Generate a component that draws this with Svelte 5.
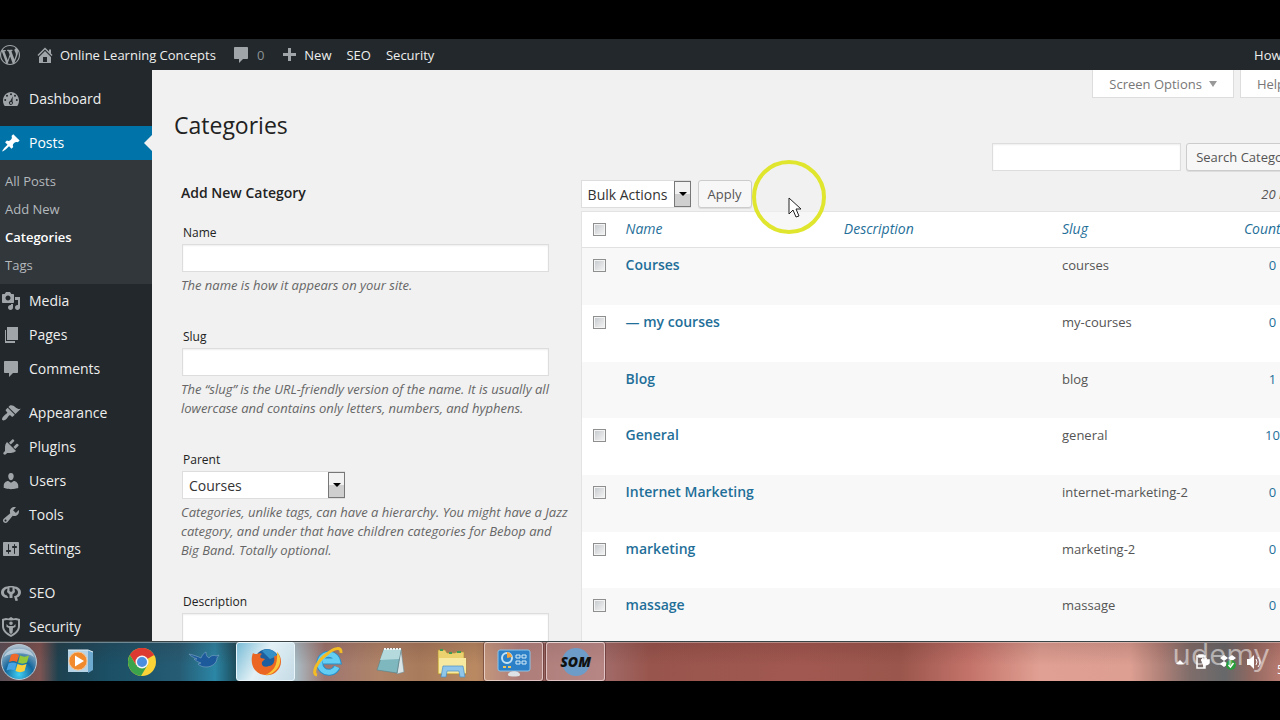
<script lang="ts">
    type Item = { label: string; icon: string; gap?: boolean; open?: boolean };

    const icons: Record<string, string> = {
        wordpress: 'M20 10c0-5.51-4.49-10-10-10C4.48 0 0 4.49 0 10c0 5.52 4.48 10 10 10 5.51 0 10-4.48 10-10zM7.78 15.37L4.37 6.22c.55-.02 1.17-.08 1.17-.08.5-.06.44-1.13-.06-1.11 0 0-1.45.11-2.37.11-.18 0-.37 0-.58-.01C4.12 2.69 6.87 1.11 10 1.11c2.33 0 4.45.87 6.05 2.34-.68-.11-1.65.39-1.65 1.58 0 .74.45 1.36.9 2.1.35.61.55 1.36.55 2.46 0 1.49-1.4 5-1.4 5l-3.03-8.37c.54-.02.82-.17.82-.17.5-.05.44-1.25-.06-1.22 0 0-1.44.12-2.38.12-.87 0-2.33-.12-2.33-.12-.5-.03-.56 1.2-.06 1.22l.92.08 1.26 3.41zM17.41 10c.24-.64.74-1.87.43-4.25.7 1.29 1.05 2.71 1.05 4.25 0 3.29-1.73 6.24-4.4 7.78.97-2.59 1.94-5.2 2.92-7.78zM6.1 18.09C3.12 16.65 1.11 13.53 1.11 10c0-1.3.23-2.48.72-3.59C3.25 10.3 4.67 14.2 6.1 18.09zm4.03-6.63l2.58 6.98c-.86.29-1.76.45-2.71.45-.79 0-1.57-.11-2.29-.33.81-2.38 1.62-4.74 2.42-7.1z',
        home: 'M16 8.5l1.53 1.53-1.06 1.06L10 4.6l-6.47 6.49-1.06-1.06L10 2.5l4 4v-2h2v4zm-6-2.46l6 5.99V18H4v-5.97zM12 17v-5H8v5h4z',
        comment: 'M4 2h12c.6 0 1 .4 1 1v10c0 .6-.4 1-1 1h-4l-4 4v-4H4c-.6 0-1-.4-1-1V3c0-.6.400-1 1-1z',
        plus: 'M17 8v3h-5v5H9v-5H4V8h5V3h3v5z',
        dashboard: 'M3.76 17h12.48c1.34-1.63 1.76-3.64 1.76-5.5C18 6.9 14.4 3 10 3S2 6.9 2 11.5c0 1.86.42 3.87 1.76 5.5zM10 4.2a1 1 0 110 2 1 1 0 010-2zM6 5.8a1 1 0 110 2 1 1 0 010-2zm8 0a1 1 0 110 2 1 1 0 010-2zM4.2 10a1 1 0 110 2 1 1 0 010-2zm11.6 0a1 1 0 110 2 1 1 0 010-2zm-4-2.8l-.3 5.3a2 2 0 11-2.2-.6zM10 13a1 1 0 100 2 1 1 0 000-2z',
        post: 'M10.44 3.02l1.82-1.82 6.36 6.35-1.83 1.82c-1.05-.68-2.48-.57-3.41.36l-.75.75c-.92.93-1.04 2.35-.35 3.41l-1.83 1.82-2.41-2.41-2.8 2.79c-.42.42-3.38 2.71-3.8 2.29s1.86-3.39 2.28-3.81l2.79-2.79L4.1 9.36l1.83-1.82c1.05.69 2.48.57 3.4-.36l.75-.75c.93-.92 1.05-2.35.36-3.41z',
        media: 'M13 11V4c0-.55-.45-1-1-1h-1.67L9 1H5L3.67 3H2c-.55 0-1 .45-1 1v7c0 .55.45 1 1 1h10c.55 0 1-.45 1-1zM7 4.5c1.38 0 2.5 1.12 2.5 2.5S8.38 9.5 7 9.5 4.5 8.38 4.5 7 5.62 4.5 7 4.5zM14 6h5v10.5c0 1.38-1.12 2.5-2.5 2.5S14 17.88 14 16.5s1.12-2.5 2.5-2.5c.17 0 .34.02.5.05V9h-3V6zm-4 8.05V13h2v3.5c0 1.38-1.12 2.5-2.5 2.5S7 17.88 7 16.5 8.12 14 9.5 14c.17 0 .34.02.5.05z',
        page: 'M6 15V2h11v13H6zm-1 1h9v2H4V5h1v11z',
        appearance: 'M14.48 11.06L7.41 3.99l1.5-1.5c.5-.56 2.3-.47 3.51.32 1.21.8 1.43 1.28 2.91 2.1 1.18.64 2.45 1.26 4.45.85zm-.71.71L6.7 4.7 4.93 6.47c-.39.39-.39 1.02 0 1.41l1.06 1.06c.39.39.39 1.03 0 1.42-.6.6-1.43 1.11-2.21 1.69-.35.26-.7.53-1.01.84C1.43 14.23.4 16.08 1.4 17.07c.99 1 2.84-.03 4.18-1.36.31-.31.58-.66.85-1.02.57-.78 1.08-1.61 1.69-2.21.39-.39 1.02-.39 1.41 0l1.06 1.06c.39.39 1.02.39 1.41 0z',
        plugin: 'M13.11 4.36L9.87 7.6 8 5.73l3.24-3.24c.35-.34 1.05-.2 1.56.32.52.51.66 1.21.31 1.55zm-8 1.77l.91-1.12 9.01 9.01-1.19.84c-.71.71-2.63 1.16-3.82 1.16H6.14L4.9 17.26c-.59.59-1.54.59-2.12 0-.59-.58-.59-1.53 0-2.12l1.24-1.24v-3.88c0-1.13.4-3.19 1.09-3.89zm7.26 3.97l3.24-3.24c.34-.35 1.04-.21 1.55.31.52.51.66 1.21.31 1.55l-3.24 3.25z',
        user: 'M10 9.25c-2.27 0-2.73-3.44-2.73-3.44C7 4.02 7.82 2 9.97 2c2.16 0 2.98 2.02 2.71 3.81 0 0-.41 3.44-2.68 3.44zm0 2.57L12.72 10c2.39 0 4.52 2.33 4.52 4.53v2.49s-3.65 1.13-7.24 1.13c-3.65 0-7.24-1.13-7.24-1.13v-2.49c0-2.25 1.94-4.48 4.47-4.48z',
        tool: 'M16.68 9.77c-1.34 1.34-3.3 1.67-4.95.99l-5.41 6.52c-.99.99-2.59.99-3.58 0s-.99-2.59 0-3.57l6.52-5.42c-.68-1.65-.35-3.61.99-4.95 1.28-1.28 3.12-1.62 4.72-1.06l-2.89 2.89 2.82 2.82 2.86-2.87c.53 1.58.18 3.39-1.08 4.65zM3.81 16.21c.4.39 1.04.39 1.43 0 .4-.4.4-1.04 0-1.43-.39-.4-1.03-.4-1.43 0-.39.39-.39 1.03 0 1.43z',
        settings: 'M18 16V4c0-.55-.45-1-1-1H3c-.55 0-1 .45-1 1v12c0 .55.45 1 1 1h14c.55 0 1-.45 1-1zM8 11h1c.55 0 1 .45 1 1s-.45 1-1 1H8v1.5c0 .28-.22.5-.5.5s-.5-.22-.5-.5V13H6c-.55 0-1-.45-1-1s.45-1 1-1h1V5.5c0-.28.22-.5.5-.5s.5.22.5.5V11zm5-2h-1c-.55 0-1-.45-1-1s.45-1 1-1h1V5.5c0-.28.22-.5.5-.5s.5.22.5.5V7h1c.55 0 1 .45 1 1s-.45 1-1 1h-1v5.5c0 .28-.22.5-.5.5s-.5-.22-.5-.5V9z',
        seo: 'M10 3C4.600 3 0 5 0 9.500c0 3.500 3 5.500 7.500 5.500L6 12.500C4 12 3 11 3 9.200 3 7.500 4.500 6 6.500 5.500L6 9l2.500 2.500V15h3v-3.500L14 9l-.5-3.500c2 .5 3.500 2 3.500 4 0 2-1.500 3.200-4 3.700l1.500 4.800 2.500-.5-1-3c2.600-1 4-2.900 4-5.300C20 5 15.400 3 10 3zM8.500 4.500V8l1.500 1 1.500-1V4.500z',
        security: 'M10 0L7.500 1.500 5 1 1 2v7c0 5 4 8.500 9 11 5-2.500 9-6 9-11V2l-4-1-2.500.5zM3 3.500l3-.5 4 .5 4-.5 3 .5V9c0 4-3 6.700-7 8.800C6 15.700 3 13 3 9zM10 4.500a1.800 1.800 0 100 3.600 1.800 1.800 0 000-3.600zM5.500 7v3L8 11l.5 5 1.500 1 1.500-1 .5-5 2.500-1V7l-2 2H7.500z'
    };

    const menu: Item[] = [
        { label: 'Dashboard', icon: 'dashboard' },
        { label: 'Posts', icon: 'post', gap: true, open: true },
        { label: 'Media', icon: 'media' },
        { label: 'Pages', icon: 'page' },
        { label: 'Comments', icon: 'comment' },
        { label: 'Appearance', icon: 'appearance', gap: true },
        { label: 'Plugins', icon: 'plugin' },
        { label: 'Users', icon: 'user' },
        { label: 'Tools', icon: 'tool' },
        { label: 'Settings', icon: 'settings' },
        { label: 'SEO', icon: 'seo', gap: true },
        { label: 'Security', icon: 'security' }
    ];
    const submenu = ['All Posts', 'Add New', 'Categories', 'Tags'];

    const categories = [
        { name: 'Courses', slug: 'courses', count: 0 },
        { name: '— my courses', slug: 'my-courses', count: 0 },
        { name: 'Blog', slug: 'blog', count: 1, locked: true },
        { name: 'General', slug: 'general', count: 10 },
        { name: 'Internet Marketing', slug: 'internet-marketing-2', count: 0 },
        { name: 'marketing', slug: 'marketing-2', count: 0 },
        { name: 'massage', slug: 'massage', count: 0 }
    ];

    let name = $state('');
    let slug = $state('');
    let parent = $state('Courses');
    let description = $state('');
    let search = $state('');
</script>

{#snippet icon(id: string)}
    <svg class="icon" viewBox="0 0 20 20" aria-hidden="true"><path fill-rule="evenodd" d={icons[id]} /></svg>
{/snippet}

<div class="screen">
    <div class="admin">
        <nav class="adminbar">
            <a href="#wp" aria-label="About WordPress">{@render icon('wordpress')}</a>
            <a href="#site" class="site">{@render icon('home')}Online Learning Concepts</a>
            <a href="#comments" class="bubble">{@render icon('comment')}0</a>
            <a href="#new" class="new">{@render icon('plus')}New</a>
            <a href="#seo">SEO</a>
            <a href="#security">Security</a>
            <a href="#profile" class="howdy">Howdy</a>
        </nav>

        <div class="main">
            <nav class="sidebar">
                {#each menu as item}
                    <a href="#{item.icon}" class="item" class:gap={item.gap} class:open={item.open}>
                        {@render icon(item.icon)}{item.label}
                    </a>
                    {#if item.open}
                        <div class="submenu">
                            {#each submenu as sub}
                                <a href="#{sub}" class:current={sub === 'Categories'}>{sub}</a>
                            {/each}
                        </div>
                    {/if}
                {/each}
            </nav>

            <main class="content">
                <div class="meta-tabs">
                    <button>Screen Options <span class="caret"></span></button>
                    <button>Help <span class="caret"></span></button>
                </div>
                <h1>Categories</h1>
                <form class="search">
                    <input type="text" aria-label="Search Categories" bind:value={search} />
                    <button type="button" class="btn">Search Categories</button>
                </form>

                <div class="columns">
                    <form class="add-form">
                        <h2>Add New Category</h2>
                        <div class="field">
                            <label for="name">Name</label>
                            <input id="name" type="text" bind:value={name} />
                            <p>The name is how it appears on your site.</p>
                        </div>
                        <div class="field">
                            <label for="slug">Slug</label>
                            <input id="slug" type="text" bind:value={slug} />
                            <p>The “slug” is the URL-friendly version of the name. It is usually all lowercase and contains only letters, numbers, and hyphens.</p>
                        </div>
                        <div class="field">
                            <label for="parent">Parent</label>
                            <div class="select parent">
                                <select id="parent" bind:value={parent}>
                                    <option>Courses</option>
                                    <option>Blog</option>
                                    <option>General</option>
                                </select>
                                <span class="arrow"></span>
                            </div>
                            <p>Categories, unlike tags, can have a hierarchy. You might have a Jazz category, and under that have children categories for Bebop and Big Band. Totally optional.</p>
                        </div>
                        <div class="field">
                            <label for="description">Description</label>
                            <textarea id="description" rows="5" bind:value={description}></textarea>
                        </div>
                    </form>

                    <section class="list">
                        <div class="tablenav">
                            <div class="select bulk">
                                <select aria-label="Bulk Actions">
                                    <option>Bulk Actions</option>
                                    <option>Delete</option>
                                </select>
                                <span class="arrow"></span>
                            </div>
                            <button class="btn apply">Apply</button>
                            <span class="total">20 items</span>
                        </div>
                        <table>
                            <thead>
                                <tr>
                                    <th class="check"><input type="checkbox" aria-label="Select all" /></th>
                                    <th class="name"><a href="#sort-name">Name</a></th>
                                    <th class="desc"><a href="#sort-description">Description</a></th>
                                    <th class="slug"><a href="#sort-slug">Slug</a></th>
                                    <th><a href="#sort-count">Count</a></th>
                                </tr>
                            </thead>
                            <tbody>
                                {#each categories as cat}
                                    <tr>
                                        <td class="check">
                                            {#if !cat.locked}<input type="checkbox" aria-label="Select {cat.name}" />{/if}
                                        </td>
                                        <td><a class="title" href="#{cat.slug}">{cat.name}</a></td>
                                        <td></td>
                                        <td>{cat.slug}</td>
                                        <td class="count"><a href="#posts-{cat.slug}">{cat.count}</a></td>
                                    </tr>
                                {/each}
                            </tbody>
                        </table>
                    </section>
                </div>
            </main>
        </div>
    </div>

    <footer class="taskbar">
        <button class="start" aria-label="Start">
            <svg width="38" height="38" viewBox="0 0 38 38">
                <defs>
                    <radialGradient id="orb" cx=".5" cy=".85" r=".8">
                        <stop offset="0" stop-color="#3fd0f4" /><stop offset=".5" stop-color="#14669c" /><stop offset="1" stop-color="#a9bccb" />
                    </radialGradient>
                </defs>
                <circle cx="19" cy="19" r="17.500" fill="url(#orb)" stroke="#b9c9d4" />
                <path d="M11 12c3-2 5-1.500 8 0l-2 7c-3-1.500-5-1.500-8 0z" fill="#ee6a2c" />
                <path d="M20 12.500c3 1.500 6 1.500 9 0l-2 7c-3 1.500-6 1.500-9 0z" fill="#96c83c" />
                <path d="M8.500 20.500c3-1.500 5-1.500 8 0l-2 7c-3-1.500-5-1.500-8 0z" fill="#46a4e4" />
                <path d="M17.500 21c3 1.500 6 1.500 9 0l-2 7c-3 1.500-6 1.500-9 0z" fill="#fbd03c" />
                <path d="M4 14C7 3 31 3 34 14 27 9 11 9 4 14z" fill="#fff" opacity=".45" />
            </svg>
        </button>
        <button class="task" aria-label="Media Player">
            <svg width="32" height="32" viewBox="0 0 32 32">
                <path d="M4 4h20v22H4z" fill="#b7d4e6" /><path d="M24 4l5 2v18l-5 3z" fill="#6ea9cf" /><path d="M4 4h20l5 2" stroke="#e4f1f8" fill="none" />
                <circle cx="14" cy="15" r="9" fill="#f08a2c" stroke="#f9c18c" /><path d="M11 9.500l9 5.500-9 5.500z" fill="#fff" />
            </svg>
        </button>
        <button class="task" aria-label="Chrome">
            <svg width="32" height="32" viewBox="0 0 32 32">
                <circle cx="16" cy="16" r="14" fill="#fbd336" />
                <path d="M16 16L3.900 9A14 14 0 0128.100 9z" fill="#dc3a30" /><path d="M16 9h12.100A14 14 0 003.900 9L10 19z" fill="#dc3a30" />
                <path d="M3.900 9A14 14 0 0015 30l6.500-11L16 16l-6 3z" fill="#3ba34c" />
                <circle cx="16" cy="16" r="6.500" fill="#f4f4f4" /><circle cx="16" cy="16" r="5" fill="#4b8ee0" />
            </svg>
        </button>
        <button class="task" aria-label="Bird">
            <svg width="32" height="32" viewBox="0 0 32 32">
                <path d="M1 8c4 1 8 2 12 4 1-3 3-5 5-6 0 3 1 5 3 6 2-3 6-3 7-2l3-1-2 3c0 5-5 9-11 9-3 0-6-1-8-3l3-1c-3-1-5-2-7-4l3 0C5 11 2 10 1 8z" fill="#1c5a9c" stroke="#7fa5c4" stroke-width=".6" />
            </svg>
        </button>
        <button class="task active" aria-label="Firefox">
            <svg width="32" height="32" viewBox="0 0 32 32">
                <circle cx="17" cy="15" r="12" fill="#1d5f9e" /><path d="M12 5c5-4 13-1 15 5l-7 3z" fill="#3690c8" />
                <path d="M3 7c1 1 2 1 4 1 2-1 4-1 5 0-2 1-2 3-1 4l4 1-3 3c-1 4 3 6 7 4 5-1 6-5 5-10 3 1 4-2 3-4 6 6 5 15-1 20-6 5-16 4-21-2C1 19 1 12 3 7z" fill="#ea6622" />
                <path d="M27 6c5 6 4 14-2 19-3 3-7 4-10 4 8-3 13-9 12-23z" fill="#fbc53a" />
            </svg>
        </button>
        <button class="task" aria-label="Internet Explorer">
            <svg width="32" height="32" viewBox="0 0 32 32">
                <path d="M25 21a9 9 0 11.500-6H11" fill="none" stroke="#2a8fcb" stroke-width="7" /><path d="M25 21a9 9 0 11.500-6H11" fill="none" stroke="#63cdf4" stroke-width="5" />
                <path d="M5 29C-1 28 5 15 15 8 22 2 30 0 29 7" fill="none" stroke="#f4bc24" stroke-width="3" />
            </svg>
        </button>
        <button class="task" aria-label="Notepad">
            <svg width="32" height="32" viewBox="0 0 32 32">
                <path d="M27 3l3 23-7 2z" fill="#d9e4e6" stroke="#6f8f98" stroke-width=".6" /><path d="M10 3h17l-4 24-20-3z" fill="#7fb7bf" stroke="#56828a" stroke-width=".6" />
                <path d="M10 3h17l-2 10L6 14z" fill="#b5dadd" /><path d="M10 3h17" stroke="#f0f4f4" stroke-width="2" stroke-dasharray="2 1" />
            </svg>
        </button>
        <button class="task" aria-label="Explorer">
            <svg width="34" height="32" viewBox="0 0 34 32">
                <path d="M3 4h7l2 3h8l2-1h7v6l2 1v15H3z" fill="#ecd26e" stroke="#b08f36" stroke-width=".6" /><path d="M4 12h27v15H4z" fill="#f8e9a0" />
                <path d="M5 4h3M14 7h3M22 6h4" stroke="#3f9a58" stroke-width="2" /><path d="M6 31l2-11h20l2 11h-5l-1-6H12l-1 6z" fill="#8fc6ea" stroke="#4a8fc4" stroke-width=".7" />
            </svg>
        </button>
        <button class="task framed" aria-label="Control Panel">
            <svg width="34" height="32" viewBox="0 0 34 32">
                <rect x="1" y="4" width="32" height="21" rx="2" fill="#2b80c8" stroke="#8cc3e8" />
                <circle cx="10" cy="12" r="5" fill="none" stroke="#c3e2f4" stroke-width="2" /><path d="M10 12V6a6 6 0 015 5z" fill="#f4a23c" />
                <path d="M19 9h4v3h-4zm6 0h4v3h-4zm-6 6h4v3h-4zm6 0h4v3h-4z" fill="none" stroke="#d5ecf8" /><path d="M6 21h3m2 0h3" stroke="#f1c55c" stroke-width="2" />
                <path d="M11 29c0-5 12-5 12 0 0 2-12 2-12 0z" fill="#dfe2e4" />
            </svg>
        </button>
        <button class="task framed som" aria-label="SOM">
            <svg width="30" height="30" viewBox="0 0 30 30"><circle cx="15" cy="15" r="14" fill="#6d9cc9" /></svg>
            <span>SOM</span>
        </button>
        <div class="tray">
            <svg width="10" height="6" viewBox="0 0 10 6"><path d="M1 5l4-4 4 4z" fill="#fff" /></svg>
            <svg width="16" height="16" viewBox="0 0 16 16"><path d="M3 2h8v12H3zM5 1h4v2H5z" fill="none" stroke="#fff" stroke-width="1.500" /><path d="M7 6h2V4m3 2V4M7 6h8v3c-1 2-3 2-5 2v3" stroke="#fff" fill="#fff" stroke-width="1.500" /></svg>
            <svg width="18" height="18" viewBox="0 0 18 18"><path d="M5 2l4 3-4 3-4-3zm8 0l4 3-4 3-4-3zM5 8l4 3-4 3-4-3zm8 0l4 3-4 3-4-3z" fill="#fff" /><circle cx="12" cy="12" r="5" fill="#2b9c3c" /><path d="M9.500 12l2 2 3-4" fill="none" stroke="#fff" stroke-width="1.500" /></svg>
            <svg width="16" height="16" viewBox="0 0 16 16"><path d="M1 5h3l4-4v14l-4-4H1z" fill="#fff" /><path d="M10 5q2 3 0 6m2-8q4 5 0 10" fill="none" stroke="#fff" /></svg>
            <span class="clock">5:20</span>
        </div>
    </footer>

    <span class="watermark">udemy</span>
    <svg class="pointer" width="76" height="76" viewBox="0 0 76 76" aria-hidden="true">
        <circle cx="38" cy="38" r="35" fill="#f1f1f1" fill-opacity=".6" stroke="#e0e62e" stroke-width="4" />
        <path d="M38 39v16l4-4 3 7 3-1-3-7h5z" fill="#fff" stroke="#222" />
    </svg>
</div>

<style>
    :global(body) { background: #000; }
    .screen { position: relative; box-sizing: border-box; height: 100vh; padding: 39px 0; overflow: hidden; display: flex; flex-direction: column; font-family: "Open Sans", sans-serif; font-size: 13px; color: #555; }
    .screen a { text-decoration: none; color: #1f6f99; }
    button, input, select, textarea { font-family: inherit; font-size: 13px; box-sizing: border-box; margin: 0; }
    .icon { width: 20px; height: 20px; fill: currentColor; flex: none; }

    /* the admin page is wider than the window, its right edge is cut off */
    .admin { flex: 1; min-height: 0; margin-right: -52px; overflow: hidden; display: flex; flex-direction: column; background: #f1f1f1; }

    .adminbar { flex: none; height: 31px; display: flex; align-items: center; background: #22282b; }
    .screen .adminbar a { display: flex; align-items: center; color: #eee; margin-right: 15px; }
    .adminbar .icon { color: #a0a5aa; }
    .adminbar .site { gap: 5px; }
    .adminbar .bubble { gap: 6px; }
    .screen .adminbar .bubble { color: #8d9296; }
    .adminbar .new { gap: 5px; }
    .screen .adminbar .howdy { margin: 0 36px 0 auto; }

    .main { flex: 1; min-height: 0; display: flex; }
    .sidebar { flex: none; width: 152px; padding-top: 12px; background: #22282b; box-sizing: border-box; }
    .item { position: relative; display: flex; align-items: center; gap: 8px; height: 34px; padding-left: 1px; font-size: 14px; line-height: 18px; }
    .screen .item { color: #eee; }
    .item .icon { color: #a0a5aa; }
    .item.gap { margin-top: 10px; }
    .screen .item.open, .item.open .icon { color: #fff; }
    .item.open { background: #0074a9; }
    .item.open::after { content: ''; position: absolute; right: 0; top: 9px; border: 8px solid transparent; border-left: 0; border-right-color: #f1f1f1; }
    .submenu { padding: 7px 5px 5px; background: #32373b; }
    .screen .submenu a { display: block; line-height: 28px; color: #b4b9be; }
    .screen .submenu a.current { color: #fff; font-weight: 600; }

    .content { flex: 1; min-width: 0; padding: 0 22px; }
    .meta-tabs { display: flex; justify-content: flex-end; gap: 6px; height: 28px; margin-right: -7px; }
    .meta-tabs button { display: flex; align-items: center; gap: 7px; padding: 0 16px; border: 1px solid #ddd; border-top: 0; background: #fff; color: #777; }
    .caret { border: 4px solid transparent; border-top: 6px solid #999; border-bottom: 0; }
    h1 { margin: 11px 0 2px; font-size: 23px; line-height: 32px; font-weight: 400; color: #222; }
    .search { display: flex; justify-content: flex-end; gap: 5px; margin-right: -5px; }
    .search input { width: 189px; }
    input[type="text"], textarea { height: 28px; border: 1px solid #ddd; background: #fff; box-shadow: inset 0 1px 2px rgba(0, 0, 0, 0.07); }
    .btn { height: 28px; padding: 0 9px; border: 1px solid #ccc; border-radius: 3px; background: #f7f7f7; color: #555; box-shadow: 0 1px 0 #ddd; white-space: nowrap; }

    .columns { display: flex; margin-top: 9px; }
    .add-form { flex: none; width: 35%; box-sizing: border-box; padding-left: 7px; }
    h2 { margin: 0 0 15px; font-size: 14px; line-height: 26px; font-weight: 600; color: #222; }
    .field { margin-bottom: 30px; }
    .field label { display: block; padding-left: 2px; font-size: 12px; line-height: 23px; color: #222; }
    .field input, .field textarea { display: block; width: 94%; margin-left: 1px; }
    .field textarea { height: 110px; }
    .field p { margin: 4px 0 0; line-height: 19px; font-style: italic; color: #666; }

    .select { position: relative; }
    .select select { display: block; width: 100%; height: 28px; padding: 0 6px; border: 1px solid #ddd; border-radius: 0; background: #fff; color: #333; font-size: 14px; appearance: none; }
    .parent { width: 163px; margin-left: 1px; }
    .bulk { width: 110px; }
    .arrow { position: absolute; right: 0; top: 1px; width: 17px; height: 26px; box-sizing: border-box; border: 1px solid #777; background: linear-gradient(#f2f2f2 50%, #cfcfcf 50%); pointer-events: none; }
    .arrow::after { content: ''; position: absolute; left: 4px; top: 10px; border: 4px solid transparent; border-top-color: #000; border-bottom: 0; }

    .list { flex: 1; min-width: 0; padding-left: 9px; }
    .tablenav { display: flex; align-items: center; gap: 7px; margin-bottom: 3px; }
    .total { margin-left: auto; font-style: italic; }
    table { width: 100%; table-layout: fixed; border-collapse: separate; border-spacing: 0; background: #fff; border: 1px solid #e3e3e3; box-sizing: border-box; }
    th, td { box-sizing: border-box; padding: 8px; line-height: 18px; text-align: left; vertical-align: top; }
    th { height: 36px; border-bottom: 1px solid #e1e1e1; font-size: 14px; font-weight: 400; font-style: italic; }
    td { height: 57px; }
    tr:nth-child(3n) td { height: 56px; }
    tbody tr:nth-child(odd) td { background: #f8f8f8; }
    .check { width: 36px; padding: 11px; line-height: 0; }
    .name, .desc { width: 30%; }
    .slug { width: 25%; }
    .title { font-size: 14px; font-weight: 600; }
    .count { text-align: center; }
    input[type="checkbox"] { appearance: none; width: 13px; height: 13px; border: 1px solid #8e8f8f; background: linear-gradient(135deg, #c4c8cc, #f6f6f6); box-shadow: inset 0 0 0 1px #f4f4f4; }

    .taskbar { flex: none; height: 40px; box-sizing: border-box; display: flex; align-items: center; gap: 3px; overflow: hidden; border-top: 1px solid #3b4446; box-shadow: inset 0 1px 0 rgba(255, 255, 255, 0.35);
        background: linear-gradient(rgba(60, 20, 20, 0.15), transparent 60%), linear-gradient(90deg, #5b5058 0, #7d5452 40px, #1e4250 58px, #1b5066 110px, #265d75 180px, #2b86a6 215px, #1c4a58 237px, #a9bcc4 296px, #9e7670 325px, #b08468 380px, #a87b5c 420px, #b98a62 475px, #97635e 520px, #a26d6b 600px, #98554d 650px, #a15850 800px, #9a564c 900px, #c4736a 970px, #e0a093 1040px, #dd9f92 1130px, #b28279 1160px, #7f6d6a 1190px, #66686a 1225px, #8f6860 1250px, #b77a70 100%); }
    .taskbar button { flex: none; display: grid; place-items: center; padding: 0; border: 0; background: none; }
    .taskbar .start { width: 38px; margin-right: 9px; }
    .taskbar .task { width: 59px; height: 39px; }
    .taskbar .active { border: 1px solid #e8f6fc; border-radius: 3px; background: linear-gradient(120deg, #79bcd6, #e3f1f6 45%, #c5dbe6); }
    .taskbar .framed { border: 1px solid rgba(255, 240, 240, 0.6); border-radius: 3px; background: rgba(255, 225, 225, 0.22); box-shadow: 0 0 0 1px rgba(60, 20, 20, 0.4); }
    .som > * { grid-area: 1 / 1; }
    .som span { font-size: 14px; font-weight: 800; font-style: italic; color: #111; }
    .tray { display: flex; align-items: center; gap: 9px; margin: 0 -25px 0 auto; }
    .clock { width: 28px; margin-left: 6px; padding-top: 16px; font-size: 12px; color: #fff; }

    .watermark { position: absolute; right: 11px; bottom: 48px; font-size: 30px; line-height: 36px; color: #fff; opacity: 0.5; }
    .pointer { position: absolute; left: 751px; top: 159px; }
</style>
